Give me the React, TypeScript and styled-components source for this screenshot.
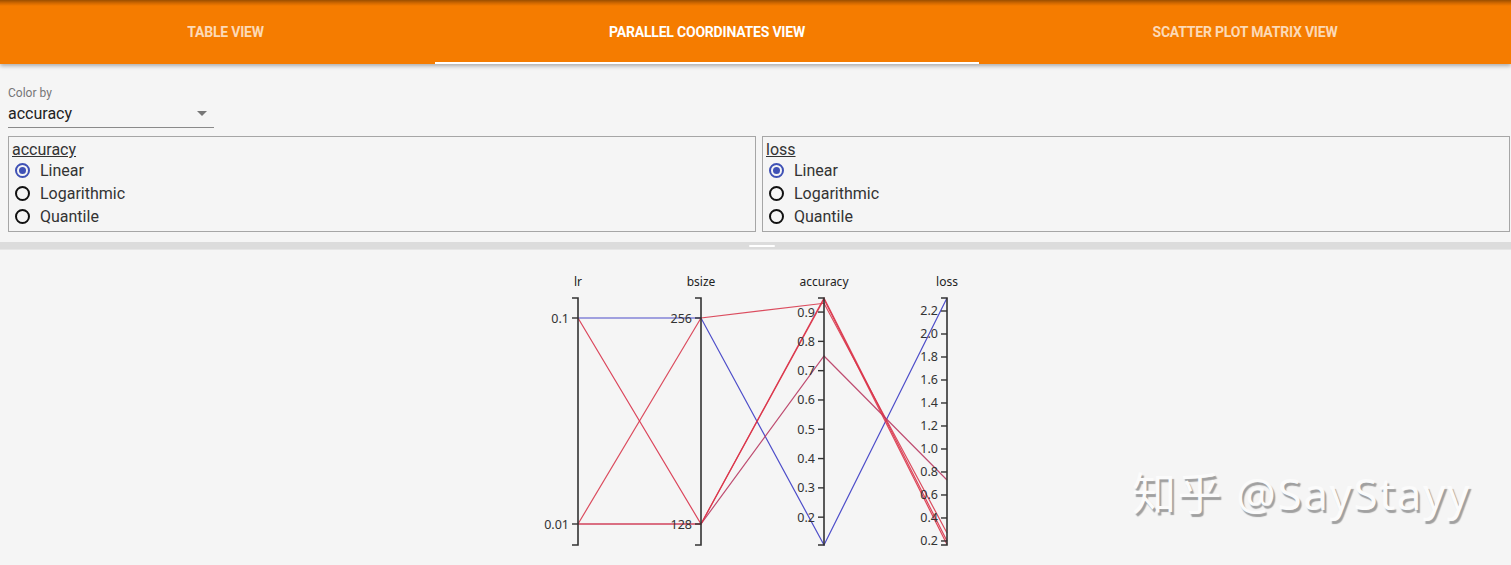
import React from 'react';
import styled, { createGlobalStyle } from 'styled-components';

const GlobalStyle = createGlobalStyle`
    html, body {
        margin: 0;
        padding: 0;
        background: #f5f5f5;
        font-family: Roboto, "Noto Sans", sans-serif;
        color: #333;
    }
`;

// #region ====== style ===
const Page = styled.div`
    position: relative;
    width: 1511px;
    height: 565px;
    overflow: hidden;
    background: #f5f5f5;
`;

const TabBar = styled.div`
    display: grid;
    grid-template-columns: 435px 544px 1fr;
    height: 64px;
    background: linear-gradient(to bottom, #9a4e00 0px, #d06800 3px, #f57c00 6px, #f57c00 100%);
    box-shadow: 0 2px 4px rgba(0, 0, 0, 0.3);
    position: relative;
    z-index: 1;
`;

const Tab = styled.div<{ $active?: boolean; $indent?: number }>`
    display: flex;
    align-items: center;
    justify-content: center;
    padding-top: 1px;
    padding-left: ${p => p.$indent || 0}px;
    font-family: Roboto, sans-serif;
    font-weight: 700;
    font-size: 14px;
    letter-spacing: -0.2px;
    text-transform: uppercase;
    color: ${p => (p.$active ? '#ffffff' : 'rgba(255, 255, 255, 0.72)')};
    border-bottom: 2px solid ${p => (p.$active ? '#ffffff' : 'transparent')};
`;

const Controls = styled.div`
    padding: 22px 0 0 8px;
`;

const FieldLabel = styled.div`
    font-size: 12px;
    line-height: 14px;
    color: #757575;
`;

const Select = styled.div`
    display: flex;
    align-items: center;
    justify-content: space-between;
    width: 206px;
    height: 28px;
    box-sizing: border-box;
    border-bottom: 1px solid #8a8a8a;
    font-size: 16px;
    color: #222;
`;

const Caret = styled.span`
    width: 0;
    height: 0;
    margin-right: 7px;
    border-left: 5px solid transparent;
    border-right: 5px solid transparent;
    border-top: 5px solid #777;
`;

const ScaleRow = styled.div`
    display: grid;
    grid-template-columns: 1fr 1fr;
    gap: 6px;
    margin-top: 8px;
    padding-right: 1px;
`;

const ScaleBox = styled.div`
    border: 1px solid #a6a6a6;
    padding: 3px;
    height: 96px;
    box-sizing: border-box;
`;

const ScaleTitle = styled.div`
    font-size: 16px;
    line-height: 19px;
    text-decoration: underline;
    color: #333;
`;

const Option = styled.label`
    display: flex;
    align-items: center;
    height: 23px;
    font-size: 16px;
    color: #333;
`;

const Radio = styled.span<{ $checked?: boolean }>`
    display: inline-flex;
    align-items: center;
    justify-content: center;
    box-sizing: border-box;
    width: 15px;
    height: 15px;
    margin: 0 10px 0 3px;
    border-radius: 50%;
    border: 2px solid ${p => (p.$checked ? '#3f51b5' : '#111')};

    &::after {
        content: '';
        display: ${p => (p.$checked ? 'block' : 'none')};
        width: 7px;
        height: 7px;
        border-radius: 50%;
        background: #3f51b5;
    }
`;

const Splitter = styled.div`
    display: flex;
    justify-content: center;
    align-items: center;
    height: 7px;
    margin-top: 10px;
    padding-left: 12px;
    background: #dcdcdc;
    border-bottom: 1px solid #e6e6e6;
`;

const Handle = styled.span`
    width: 26px;
    height: 2px;
    border-radius: 1px;
    background: #ffffff;
`;

const ChartArea = styled.div`
    display: flex;
    padding-left: 510px;
`;

const Watermark = styled.div`
    position: absolute;
    left: 1132px;
    top: 459px;
    font-family: "Noto Sans", "Noto Sans CJK SC", sans-serif;
    font-size: 44px;
    letter-spacing: 1.6px;
    color: #fbfbfb;
    text-shadow: 2px 3px 1px #a0a0a0;
    white-space: nowrap;
    pointer-events: none;
`;
// #endregion === style ===

const TOP = 298;
const BOTTOM = 545;
const AXES = { lr: 578, bsize: 701, accuracy: 824, loss: 947 };

const accY = (v: number) => BOTTOM - ((v - 0.105) / (0.948 - 0.105)) * (BOTTOM - TOP);
const lossY = (v: number) => BOTTOM - ((v - 0.165) / (2.313 - 0.165)) * (BOTTOM - TOP);

type Run = { lr: number; bsize: number; accuracy: number; loss: number; color: string };

const runs: Run[] = [
    { lr: 318, bsize: 318, accuracy: 0.105, loss: 2.313, color: '#3b3bc4' },
    { lr: 524, bsize: 318, accuracy: 0.93, loss: 0.27, color: '#d83a4e' },
    { lr: 318, bsize: 524, accuracy: 0.948, loss: 0.2, color: '#d8324a' },
    { lr: 524, bsize: 524, accuracy: 0.75, loss: 0.73, color: '#b83a62' },
    { lr: 524, bsize: 524, accuracy: 0.944, loss: 0.17, color: '#dc3448' },
];

type AxisProps = { x: number; title: string; ticks: { y: number; label: string }[] };

const Axis: React.FC<AxisProps> = ({ x, title, ticks }) => (
    <g>
        <text x={x} y={286} textAnchor="middle" fontSize={12} fill="#222">
            {title}
        </text>
        <path d={`M${x - 6},${TOP}H${x}V${BOTTOM}H${x - 6}`} fill="none" stroke="#333" strokeWidth={1.6} />
        {ticks.map(t => (
            <g key={t.label}>
                <line x1={x - 6} x2={x} y1={t.y} y2={t.y} stroke="#333" strokeWidth={1.4} />
                <text x={x - 9} y={t.y + 4.5} textAnchor="end" fontSize={12.5} fill="#333">
                    {t.label}
                </text>
            </g>
        ))}
    </g>
);

const accTicks = [0.9, 0.8, 0.7, 0.6, 0.5, 0.4, 0.3, 0.2].map(v => ({ y: accY(v), label: v.toFixed(1) }));
const lossTicks = [2.2, 2.0, 1.8, 1.6, 1.4, 1.2, 1.0, 0.8, 0.6, 0.4, 0.2].map(v => ({
    y: lossY(v),
    label: v.toFixed(1),
}));

const ParallelChart: React.FC = () => (
    <svg width={470} height={315} viewBox="510 250 470 315" fontFamily='"Noto Sans", "DejaVu Sans", sans-serif'>
        {runs.map((r, i) => (
            <polyline
                key={i}
                points={`${AXES.lr},${r.lr} ${AXES.bsize},${r.bsize} ${AXES.accuracy},${accY(r.accuracy)} ${AXES.loss},${lossY(r.loss)}`}
                fill="none"
                stroke={r.color}
                strokeWidth={1.2}
                strokeOpacity={0.9}
            />
        ))}
        <Axis x={AXES.lr} title="lr" ticks={[{ y: 318, label: '0.1' }, { y: 524, label: '0.01' }]} />
        <Axis x={AXES.bsize} title="bsize" ticks={[{ y: 318, label: '256' }, { y: 524, label: '128' }]} />
        <Axis x={AXES.accuracy} title="accuracy" ticks={accTicks} />
        <Axis x={AXES.loss} title="loss" ticks={lossTicks} />
    </svg>
);

const ScalePicker: React.FC<{ name: string }> = ({ name }) => (
    <ScaleBox>
        <ScaleTitle>{name}</ScaleTitle>
        {['Linear', 'Logarithmic', 'Quantile'].map(opt => (
            <Option key={opt}>
                <Radio $checked={opt === 'Linear'} />
                {opt}
            </Option>
        ))}
    </ScaleBox>
);

export default function App() {
    return (
        <Page>
            <GlobalStyle />
            <TabBar>
                <Tab $indent={16}>Table View</Tab>
                <Tab $active>Parallel Coordinates View</Tab>
                <Tab>Scatter Plot Matrix View</Tab>
            </TabBar>
            <Controls>
                <FieldLabel>Color by</FieldLabel>
                <Select>
                    accuracy
                    <Caret />
                </Select>
                <ScaleRow>
                    <ScalePicker name="accuracy" />
                    <ScalePicker name="loss" />
                </ScaleRow>
            </Controls>
            <Splitter>
                <Handle />
            </Splitter>
            <ChartArea>
                <ParallelChart />
            </ChartArea>
            <Watermark>知乎 @SayStayy</Watermark>
        </Page>
    );
}
